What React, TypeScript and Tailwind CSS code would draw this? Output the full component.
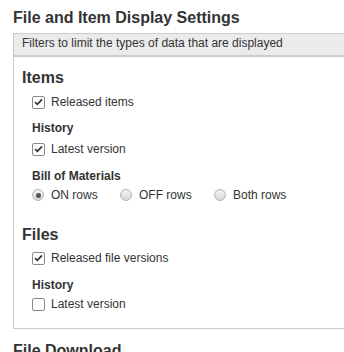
import React from "react";

function Check({ checked }: { checked: boolean }) {
  return (
    <span className="inline-flex h-[13px] w-[13px] shrink-0 items-center justify-center rounded-[2px] border border-[#8a8a8a] bg-white">
      {checked && (
        <svg width="9" height="8" viewBox="0 0 9 8">
          <path d="M1 4.2 L3.4 6.4 L8 1.4" fill="none" stroke="#333" strokeWidth="1.7" />
        </svg>
      )}
    </span>
  );
}

function Radio({ checked }: { checked: boolean }) {
  return (
    <span className="inline-flex h-[12px] w-[12px] shrink-0 items-center justify-center rounded-full border border-[#b5b5b5] bg-gradient-to-b from-[#f2f2f2] to-[#d9d9d9]">
      {checked && <span className="h-[5px] w-[5px] rounded-full bg-[#555]" />}
    </span>
  );
}

function CheckRow({ label, checked }: { label: string; checked: boolean }) {
  return (
    <div className="ml-[10px] flex h-[16px] items-center gap-[6px] text-[12px] leading-[16px]">
      <Check checked={checked} />
      <span>{label}</span>
    </div>
  );
}

function RadioRow({ label, checked }: { label: string; checked: boolean }) {
  return (
    <div className="flex h-[16px] items-center gap-[7px] text-[12px] leading-[16px]">
      <Radio checked={checked} />
      <span>{label}</span>
    </div>
  );
}

export default function App() {
  return (
    <div
      className="h-[352px] w-[344px] overflow-hidden bg-white text-[#333]"
      style={{ fontFamily: '"Liberation Sans", Arial, sans-serif' }}
    >
      <div className="pl-[13px] pt-[8px]">
        <h1 className="text-[16px] font-bold leading-[20px]">File and Item Display Settings</h1>
        <div className="mt-[5px] border-b border-l border-t border-[#cccccc]">
          <div className="border-b-2 border-[#cccccc] bg-[#ebebeb] pb-[4px] pl-[8px] pt-[1px] text-[12px] leading-[16px]">
            Filters to limit the types of data that are displayed
          </div>
          <div className="px-[8px] pb-[16px] pt-[11px]">
            <h2 className="text-[16px] font-bold leading-[20px]">Items</h2>
            <div className="mt-[6px]">
              <CheckRow label="Released items" checked />
            </div>
            <h3 className="ml-[10px] mt-[10px] text-[12px] font-bold leading-[16px]">History</h3>
            <div className="mt-[5px]">
              <CheckRow label="Latest version" checked />
            </div>
            <h3 className="ml-[10px] mt-[11px] text-[12px] font-bold leading-[16px]">Bill of Materials</h3>
            <div className="ml-[10px] mt-[3px] flex gap-[20px]">
              <div className="w-[68px]">
                <RadioRow label="ON rows" checked />
              </div>
              <div className="w-[74px]">
                <RadioRow label="OFF rows" checked={false} />
              </div>
              <RadioRow label="Both rows" checked={false} />
            </div>
            <h2 className="mt-[22px] text-[16px] font-bold leading-[20px]">Files</h2>
            <div className="mt-[5px]">
              <CheckRow label="Released file versions" checked />
            </div>
            <h3 className="ml-[10px] mt-[11px] text-[12px] font-bold leading-[16px]">History</h3>
            <div className="mt-[3px]">
              <CheckRow label="Latest version" checked={false} />
            </div>
          </div>
        </div>
        <h1 className="mt-[12px] text-[16px] font-bold leading-[20px]">File Download</h1>
      </div>
    </div>
  );
}
